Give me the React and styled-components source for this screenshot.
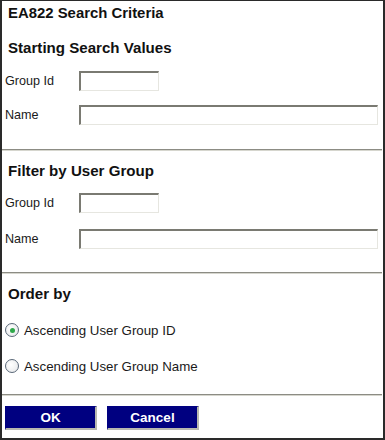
import React from "react";
import styled, { createGlobalStyle } from "styled-components";

const Global = createGlobalStyle`
  html, body { margin: 0; padding: 0; background: #ffffff; }
  body { font-family: "Liberation Sans", Arial, sans-serif; }
`;

const Panel = styled.div`
  width: 385px;
  height: 440px;
  box-sizing: border-box;
  border-top: 1px solid #2a2a2a;
  border-left: 2px solid #2a2a2a;
  border-right: 2px solid #2a2a2a;
  border-bottom: 2px solid #2a2a2a;
  background: #fff;
  font-family: "Liberation Sans", Arial, sans-serif;
  color: #111;
  display: flex;
  flex-direction: column;
`;

const Title = styled.div`
  font-weight: bold;
  font-size: 14.9px;
  line-height: 25px;
  padding-left: 6px;
`;

const Heading = styled.div`
  font-weight: bold;
  font-size: 15.1px;
  line-height: 20px;
  padding-left: 6px;
  margin-top: ${(p) => p.$top}px;
`;

const FieldRow = styled.div`
  display: flex;
  align-items: center;
  height: 20px;
  margin-top: ${(p) => p.$top}px;
`;

const Label = styled.label`
  width: 74px;
  padding-left: 3px;
  box-sizing: content-box;
  font-size: 12.6px;
  color: #1a1a1a;
`;

const Input = styled.input`
  box-sizing: border-box;
  height: 20px;
  width: ${(p) => (p.$wide ? "299px" : "80px")};
  margin: 0;
  padding: 0 3px;
  border-top: 2px solid #7a7a72;
  border-left: 2px solid #7a7a72;
  border-right: 1px solid #e6e6e0;
  border-bottom: 1px solid #e6e6e0;
  background: #fff;
  outline: none;
`;

const Divider = styled.div`
  height: 0;
  margin-top: ${(p) => p.$top}px;
  margin-right: 1px;
  border-top: 1px solid #8c8c84;
  border-bottom: 1px solid #d6d6ce;
`;

const RadioRow = styled.label`
  display: flex;
  align-items: center;
  height: 16px;
  margin-top: ${(p) => p.$top}px;
  padding-left: 3px;
  font-size: 13.3px;
  color: #1a1a1a;
  gap: 5px;
`;

const RadioDot = styled.span`
  width: 14px;
  height: 14px;
  box-sizing: border-box;
  border-radius: 50%;
  border: 1px solid #5a6878;
  background: radial-gradient(circle at 40% 40%, #ffffff 0%, #e4e6e8 100%);
  display: flex;
  align-items: center;
  justify-content: center;
  &::after {
    content: "";
    width: 5px;
    height: 5px;
    border-radius: 50%;
    background: ${(p) => (p.$checked ? "#2fa84a" : "transparent")};
  }
`;

const ButtonBar = styled.div`
  display: flex;
  gap: 10px;
  padding-left: 3px;
  margin-top: 10px;
`;

const Button = styled.button`
  width: 92px;
  height: 24px;
  box-sizing: border-box;
  margin: 0;
  padding: 0;
  background: #000080;
  color: #fff;
  font-family: "Liberation Sans", Arial, sans-serif;
  font-size: 13.5px;
  font-weight: bold;
  border-top: 1px solid #000080;
  border-left: 1px solid #000080;
  border-right: 2px solid #b8b8b0;
  border-bottom: 2px solid #b8b8b0;
  cursor: pointer;
`;

export default function App() {
  return (
    <>
      <Global />
      <Panel>
        <Title>EA822 Search Criteria</Title>
        <Heading $top={12}>Starting Search Values</Heading>
        <FieldRow $top={13}>
          <Label>Group Id</Label>
          <Input />
        </FieldRow>
        <FieldRow $top={14}>
          <Label>Name</Label>
          <Input $wide />
        </FieldRow>
        <Divider $top={24} />
        <Heading $top={10}>Filter by User Group</Heading>
        <FieldRow $top={12}>
          <Label>Group Id</Label>
          <Input />
        </FieldRow>
        <FieldRow $top={16}>
          <Label>Name</Label>
          <Input $wide />
        </FieldRow>
        <Divider $top={23} />
        <Heading $top={10}>Order by</Heading>
        <RadioRow $top={18}>
          <RadioDot $checked />
          Ascending User Group ID
        </RadioRow>
        <RadioRow $top={20}>
          <RadioDot />
          Ascending User Group Name
        </RadioRow>
        <Divider $top={20} />
        <ButtonBar>
          <Button>OK</Button>
          <Button>Cancel</Button>
        </ButtonBar>
      </Panel>
    </>
  );
}
